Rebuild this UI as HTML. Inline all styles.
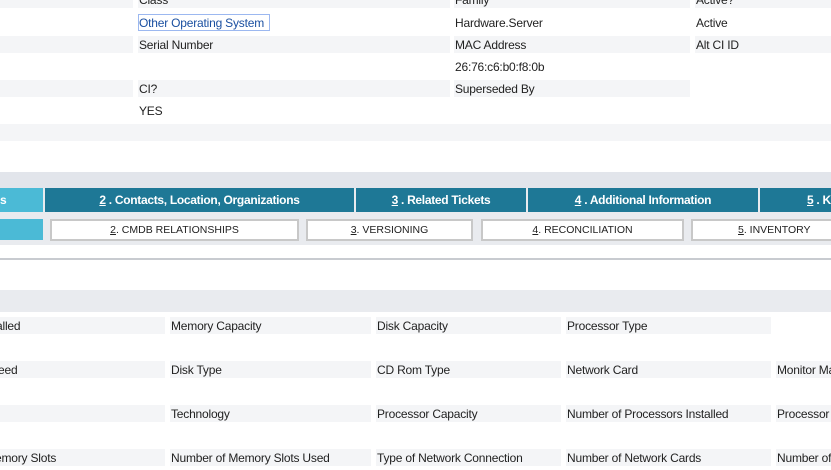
<!DOCTYPE html>
<html><head><style>
body{margin:0;width:831px;height:470px;overflow:hidden;background:#fff;font-family:"Liberation Sans",sans-serif;font-size:12px;color:#222;position:relative}
.a{position:absolute;box-sizing:border-box}
.g{background:#f4f5f7}
.t{position:absolute;white-space:nowrap;line-height:16px;letter-spacing:-0.2px;padding-top:1px}
.tab{position:absolute;top:188px;height:24px;background:#1e7896;color:#fff;font-weight:bold;font-size:12px;line-height:24px;text-align:center;white-space:nowrap;overflow:hidden;letter-spacing:-0.3px}
.sub{position:absolute;top:219px;height:22px;background:#fff;border:2px solid #c8c8c8;font-size:10.5px;line-height:18px;text-align:center;white-space:nowrap;overflow:hidden;box-sizing:border-box}
u{text-decoration:underline}
</style></head><body>
<div class="a g" style="left:0;top:0;width:133px;height:8px"></div>
<div class="a g" style="left:138px;top:0;width:312px;height:8px"></div>
<div class="a g" style="left:454px;top:0;width:236px;height:8px"></div>
<div class="a g" style="left:695px;top:0;width:136px;height:8px"></div>
<div class="t" style="left:139px;top:-9px">Class</div>
<div class="t" style="left:455px;top:-9px">Family</div>
<div class="t" style="left:696px;top:-9px">Active?</div>

<div class="a" style="left:138px;top:14px;width:132px;height:17px;border:1px solid #9cb8f0"></div>
<div class="t" style="left:139px;top:14px;color:#1a4fa0">Other Operating System</div>
<div class="t" style="left:455px;top:14px">Hardware.Server</div>
<div class="t" style="left:696px;top:14px">Active</div>

<div class="a g" style="left:0;top:36px;width:133px;height:17px"></div>
<div class="a g" style="left:138px;top:36px;width:312px;height:17px"></div>
<div class="a g" style="left:454px;top:36px;width:236px;height:17px"></div>
<div class="a g" style="left:695px;top:36px;width:136px;height:17px"></div>
<div class="t" style="left:139px;top:36px">Serial Number</div>
<div class="t" style="left:455px;top:36px">MAC Address</div>
<div class="t" style="left:696px;top:36px">Alt CI ID</div>
<div class="t" style="left:455px;top:58px">26:76:c6:b0:f8:0b</div>

<div class="a g" style="left:0;top:80px;width:133px;height:17px"></div>
<div class="a g" style="left:138px;top:80px;width:312px;height:17px"></div>
<div class="a g" style="left:454px;top:80px;width:236px;height:17px"></div>
<div class="t" style="left:139px;top:80px">CI?</div>
<div class="t" style="left:455px;top:80px">Superseded By</div>
<div class="t" style="left:139px;top:102px">YES</div>
<div class="a g" style="left:0;top:124px;width:831px;height:17px"></div>

<div class="a" style="left:0;top:172px;width:831px;height:16px;background:#e2e5eb"></div>
<div class="a" style="left:0;top:188px;width:831px;height:57px;background:#e9ebef"></div>
<div class="tab" style="left:0;width:43px;background:#4bbad6;text-align:left">s</div>
<div class="tab" style="left:45px;width:309px"><u>2</u> . Contacts, Location, Organizations</div>
<div class="tab" style="left:356px;width:170px"><u>3</u> . Related Tickets</div>
<div class="tab" style="left:528px;width:230px"><u>4</u> . Additional Information</div>
<div class="tab" style="left:760px;width:71px;text-align:left;padding-left:47px"><u>5</u> . Knowledge</div>
<div class="a" style="left:0;top:219px;width:43px;height:21px;background:#4bbad6"></div>
<div class="sub" style="left:50px;width:249px"><u>2</u>. CMDB RELATIONSHIPS</div>
<div class="sub" style="left:306px;width:167px"><u>3</u>. VERSIONING</div>
<div class="sub" style="left:481px;width:203px"><u>4</u>. RECONCILIATION</div>
<div class="sub" style="left:691px;width:150px;text-align:left;padding-left:45px"><u>5</u>. INVENTORY</div>
<div class="a" style="left:0;top:258px;width:831px;height:2px;background:#c8cbd0"></div>

<div class="a" style="left:0;top:290px;width:831px;height:22px;background:#e9ebef"></div>
<div class="a g" style="left:0;top:317px;width:165px;height:17px"></div>
<div class="a g" style="left:170px;top:317px;width:201px;height:17px"></div>
<div class="a g" style="left:376px;top:317px;width:185px;height:17px"></div>
<div class="a g" style="left:566px;top:317px;width:205px;height:17px"></div>
<div class="t" style="left:-4px;top:317px">alled</div>
<div class="t" style="left:171px;top:317px">Memory Capacity</div>
<div class="t" style="left:377px;top:317px">Disk Capacity</div>
<div class="t" style="left:567px;top:317px">Processor Type</div>

<div class="a g" style="left:0;top:361px;width:165px;height:17px"></div>
<div class="a g" style="left:170px;top:361px;width:201px;height:17px"></div>
<div class="a g" style="left:376px;top:361px;width:185px;height:17px"></div>
<div class="a g" style="left:566px;top:361px;width:205px;height:17px"></div>
<div class="a g" style="left:776px;top:361px;width:55px;height:17px"></div>
<div class="t" style="left:-2px;top:361px">eed</div>
<div class="t" style="left:171px;top:361px">Disk Type</div>
<div class="t" style="left:377px;top:361px">CD Rom Type</div>
<div class="t" style="left:567px;top:361px">Network Card</div>
<div class="t" style="left:777px;top:361px">Monitor Ma</div>

<div class="a g" style="left:0;top:405px;width:165px;height:17px"></div>
<div class="a g" style="left:170px;top:405px;width:201px;height:17px"></div>
<div class="a g" style="left:376px;top:405px;width:185px;height:17px"></div>
<div class="a g" style="left:566px;top:405px;width:205px;height:17px"></div>
<div class="a g" style="left:776px;top:405px;width:55px;height:17px"></div>
<div class="t" style="left:171px;top:405px">Technology</div>
<div class="t" style="left:377px;top:405px">Processor Capacity</div>
<div class="t" style="left:567px;top:405px">Number of Processors Installed</div>
<div class="t" style="left:777px;top:405px">Processor S</div>

<div class="a g" style="left:0;top:449px;width:165px;height:17px"></div>
<div class="a g" style="left:170px;top:449px;width:201px;height:17px"></div>
<div class="a g" style="left:376px;top:449px;width:185px;height:17px"></div>
<div class="a g" style="left:566px;top:449px;width:205px;height:17px"></div>
<div class="a g" style="left:776px;top:449px;width:55px;height:17px"></div>
<div class="t" style="left:-5px;top:449px">emory Slots</div>
<div class="t" style="left:171px;top:449px">Number of Memory Slots Used</div>
<div class="t" style="left:377px;top:449px">Type of Network Connection</div>
<div class="t" style="left:567px;top:449px">Number of Network Cards</div>
<div class="t" style="left:777px;top:449px">Number of</div>
</body></html>
